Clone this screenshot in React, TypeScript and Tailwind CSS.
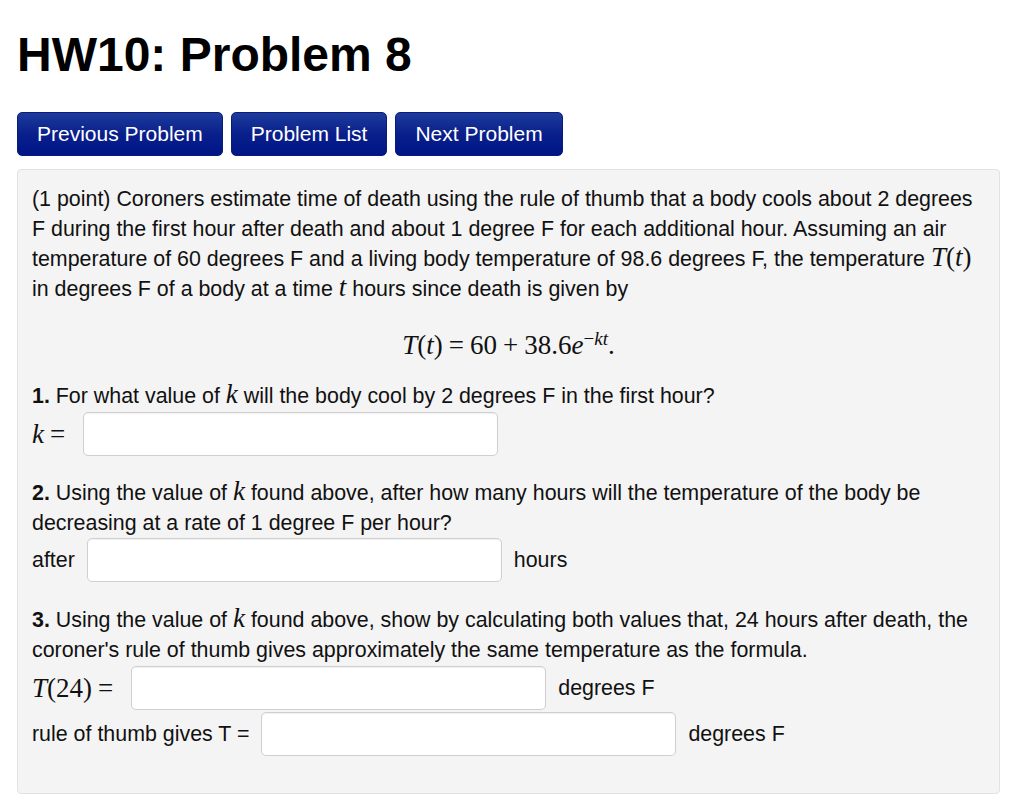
import React from "react";

function M({ children }: { children: React.ReactNode }) {
  return (
    <span className="font-['Liberation_Serif',serif] text-[27px] leading-[18px]">
      {children}
    </span>
  );
}

function I({ children }: { children: React.ReactNode }) {
  return <i className="italic">{children}</i>;
}

function Op({ children }: { children: React.ReactNode }) {
  return <span className="mx-[6px]">{children}</span>;
}

function AnswerBox({ width = "w-[415px]" }: { width?: string }) {
  return (
    <input
      type="text"
      className={`${width} h-[44px] rounded-[5px] border border-[#cfcfcf] bg-white px-3 shadow-[inset_0_1px_1px_rgba(0,0,0,0.06)] outline-none`}
    />
  );
}

function NavButton({ label }: { label: string }) {
  return (
    <button className="h-[44px] rounded-[5px] border border-[#0a1b78] bg-linear-to-b from-[#1d3b9c] via-[#0a1f8b] to-[#001587] px-[19px] text-[21px] text-white">
      {label}
    </button>
  );
}

export default function App() {
  return (
    <div className="min-h-screen bg-white pl-[17px] font-['Liberation_Sans',Arial,sans-serif] text-[#111]">
      <h1 className="pt-[28px] text-[48px] font-bold leading-[53px] text-black">
        HW10: Problem 8
      </h1>

      <div className="mt-[31px] flex gap-2">
        <NavButton label="Previous Problem" />
        <NavButton label="Problem List" />
        <NavButton label="Next Problem" />
      </div>

      <div className="mt-[13px] w-[983px] rounded-[4px] border border-[#e2e2e2] bg-[#f4f4f4] px-[14px] pt-[14px] pb-[37px] text-[21.4px] leading-[30px]">
        <p>
          (1 point) Coroners estimate time of death using the rule of thumb that a body cools about 2
          degrees F during the first hour after death and about 1 degree F for each additional hour.
          Assuming an air temperature of 60 degrees F and a living body temperature of 98.6 degrees
          F, the temperature{" "}
          <M>
            <I>T</I>(<I>t</I>)
          </M>{" "}
          in degrees F of a body at a time{" "}
          <M>
            <I>t</I>
          </M>{" "}
          hours since death is given by
        </p>

        <div className="pt-[26px] pb-[19px] text-center leading-[30px]">
          <span className="font-['Liberation_Serif',serif] text-[27px]">
            <I>T</I>(<I>t</I>)<Op>=</Op>60<Op>+</Op>38.6<I>e</I>
            <sup className="text-[19px]">
              −<I>kt</I>
            </sup>
            .
          </span>
        </div>

        {/* question 1 */}
        <p>
          <b>1.</b> For what value of{" "}
          <M>
            <I>k</I>
          </M>{" "}
          will the body cool by 2 degrees F in the first hour?
        </p>
        <div className="mt-px flex items-center gap-3">
          <M>
            <I>k</I>
            <Op>=</Op>
          </M>
          <AnswerBox />
        </div>

        {/* question 2 */}
        <p className="mt-[22px]">
          <b>2.</b> Using the value of{" "}
          <M>
            <I>k</I>
          </M>{" "}
          found above, after how many hours will the temperature of the body be decreasing at a rate
          of 1 degree F per hour?
        </p>
        <div className="flex items-center gap-3">
          <span>after</span>
          <AnswerBox />
          <span>hours</span>
        </div>

        {/* question 3 */}
        <p className="mt-[23px]">
          <b>3.</b> Using the value of{" "}
          <M>
            <I>k</I>
          </M>{" "}
          found above, show by calculating both values that, 24 hours after death, the coroner's
          rule of thumb gives approximately the same temperature as the formula.
        </p>
        <div className="mt-px flex items-center gap-3">
          <M>
            <I>T</I>(24)
            <Op>=</Op>
          </M>
          <AnswerBox />
          <span>degrees F</span>
        </div>
        <div className="mt-[2px] flex items-center gap-3">
          <span>rule of thumb gives T =</span>
          <AnswerBox />
          <span>degrees F</span>
        </div>
      </div>
    </div>
  );
}
